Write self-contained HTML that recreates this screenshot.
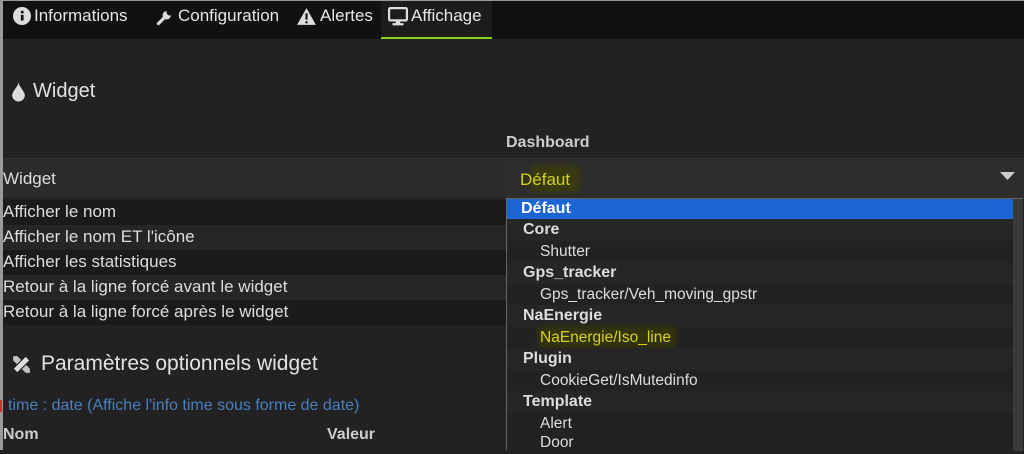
<!DOCTYPE html>
<html><head><meta charset="utf-8"><style>
*{margin:0;padding:0;box-sizing:border-box}
body{width:1024px;height:450px;overflow:hidden;background:#222;font-family:"Liberation Sans",sans-serif;color:#ddd;position:relative}
.abs{position:absolute;white-space:nowrap}
.tabs{position:absolute;left:0;top:0;width:1024px;height:39px;background:#111;border-top:1px solid #999}
.tab{position:absolute;top:0;height:38px;font-size:17px;color:#e6e6e6;line-height:20px;display:flex;align-items:flex-start;padding-top:5px;gap:3px}
.tab svg{display:block;margin-top:1px}
.leftb{position:absolute;left:0;top:0;width:3px;height:450px;background:#9a9a9a}
.row{position:absolute;left:3px;width:503px;height:25px;font-size:17px;line-height:24px;color:#ddd}
.dd{position:absolute;left:506px;top:198px;width:517px;height:252px;background:#222;border:1px solid #666;border-bottom:none}
.it{position:absolute;left:0;width:506px;height:21.5px;font-size:15.5px;line-height:21px;color:#ddd}
.g{font-weight:bold;font-size:16px;padding-left:16px;background:#262626}
.s{padding-left:33px}
</style></head><body>
<div class="tabs">
 <div class="tab" style="left:13px"><svg width="18" height="18" viewBox="0 0 16 16"><circle cx="8" cy="8" r="8" fill="#ddd"/><rect x="7" y="7" width="2.4" height="5" fill="#111"/><circle cx="8.2" cy="4.5" r="1.3" fill="#111"/></svg>Informations</div>
 <div class="tab" style="left:156px"><svg width="19" height="19" viewBox="0 0 16 16"><path d="M2 14 L8.5 7.5" stroke="#ddd" stroke-width="2.6" stroke-linecap="round"/><path d="M9 3.5 A3.5 3.5 0 1 0 12.5 7 L10.5 7 L9 5.5 Z" fill="#ddd"/></svg>Configuration</div>
 <div class="tab" style="left:296px"><svg width="21" height="19" viewBox="0 0 20 18"><path d="M10 1 L19 17 L1 17 Z" fill="#ddd"/><rect x="9" y="6" width="2" height="6" fill="#111"/><rect x="9" y="13.5" width="2" height="2" fill="#111"/></svg>Alertes</div>
 <div class="tab" style="left:381px;width:111px;background:#1c1c1c;border-bottom:2px solid #8fce1e;padding-left:7px"><svg width="20" height="19" viewBox="0 0 18 17"><rect x="1" y="1" width="16" height="11" rx="1" fill="none" stroke="#ddd" stroke-width="2"/><rect x="7" y="12" width="4" height="3" fill="#ddd"/><rect x="4" y="14.5" width="10" height="2" fill="#ddd"/></svg>Affichage</div>
</div>
<div class="leftb"></div>
<div class="abs" style="left:11px;top:80px;font-size:20px;color:#e2e2e2;display:flex;align-items:center;gap:7px"><svg width="15" height="20" viewBox="0 0 14 19"><path d="M7 0 C7 4 1 9 1 12.5 A6 6 0 0 0 13 12.5 C13 9 7 4 7 0Z" fill="#ddd"/></svg>Widget</div>
<div class="abs" style="left:506px;top:132px;font-size:16px;font-weight:bold;color:#ccc;margin-top:2px">Dashboard</div>
<div class="abs" style="left:3px;top:158px;width:1021px;height:40px;background:#2b2b2b;border-top:1px solid #333"></div>
<div class="abs" style="left:3px;top:169px;font-size:17px;color:#ddd">Widget</div>
<div class="abs" style="left:506px;top:160px;width:518px;height:38px;background:#2d2d2d"></div>
<div class="abs" style="left:530px;top:165px;width:50px;height:28px;background:#3a3a10;border-radius:8px;filter:blur(3px)"></div>
<div class="abs" style="left:520px;top:170px;font-size:17px;color:#d4d21b">Défaut</div>
<svg class="abs" style="left:1000px;top:172px" width="15" height="9" viewBox="0 0 15 9"><path d="M0 0 L15 0 L7.5 8Z" fill="#ccc"/></svg>
<div class="row" style="top:200px;background:#1b1b1b">Afficher le nom</div>
<div class="row" style="top:225px;background:#262626">Afficher le nom ET l'icône</div>
<div class="row" style="top:250px;background:#1b1b1b">Afficher les statistiques</div>
<div class="row" style="top:275px;background:#262626">Retour à la ligne forcé avant le widget</div>
<div class="row" style="top:300px;background:#1b1b1b">Retour à la ligne forcé après le widget</div>
<div class="abs" style="left:10px;top:352px;font-size:21px;color:#e2e2e2;display:flex;align-items:center;gap:8px"><svg width="23" height="23" viewBox="0 0 22 22"><path d="M3 15 L15 3 L19 7 L7 19Z" fill="#ddd"/><path d="M3 3 L7 3 L19 15 L19 19 L15 19 L3 7Z" fill="#ddd" opacity=".85"/><path d="M3 15 L15 3 L19 7 L7 19Z" fill="none" stroke="#222" stroke-width="1"/></svg>Paramètres optionnels widget</div>
<div class="abs" style="left:0;top:400px;width:2px;height:12px;background:#c33"></div>
<div class="abs" style="left:8px;top:397px;font-size:16px;color:#4a7fc0">time : date (Affiche l'info time sous forme de date)</div>
<div class="abs" style="left:3px;top:426px;font-size:16px;font-weight:bold;color:#ccc">Nom</div>
<div class="abs" style="left:327px;top:426px;font-size:16px;font-weight:bold;color:#ccc">Valeur</div>
<div class="dd">
 <div class="it" style="top:0;height:20px;background:#1b66d2;color:#fff;font-weight:bold;font-size:16px;padding-left:14px;line-height:19px">Défaut</div>
 <div class="it g" style="top:20px">Core</div>
 <div class="it s" style="top:41.5px">Shutter</div>
 <div class="it g" style="top:63px">Gps_tracker</div>
 <div class="it s" style="top:84.5px">Gps_tracker/Veh_moving_gpstr</div>
 <div class="it g" style="top:106px">NaEnergie</div>
 <div class="it s" style="top:127.5px"><span style="position:absolute;left:30px;top:-1px;width:140px;height:22px;background:#33330f;border-radius:6px;filter:blur(2px)"></span><span style="position:relative;color:#d4d21b">NaEnergie/Iso_line</span></div>
 <div class="it g" style="top:149px">Plugin</div>
 <div class="it s" style="top:170.5px">CookieGet/IsMutedinfo</div>
 <div class="it g" style="top:192px">Template</div>
 <div class="it s" style="top:213.5px">Alert</div>
 <div class="it s" style="top:233px">Door</div>
 <div class="abs" style="left:506px;top:0;width:10px;height:252px;background:#3a3a3a"></div>
</div>
</body></html>
